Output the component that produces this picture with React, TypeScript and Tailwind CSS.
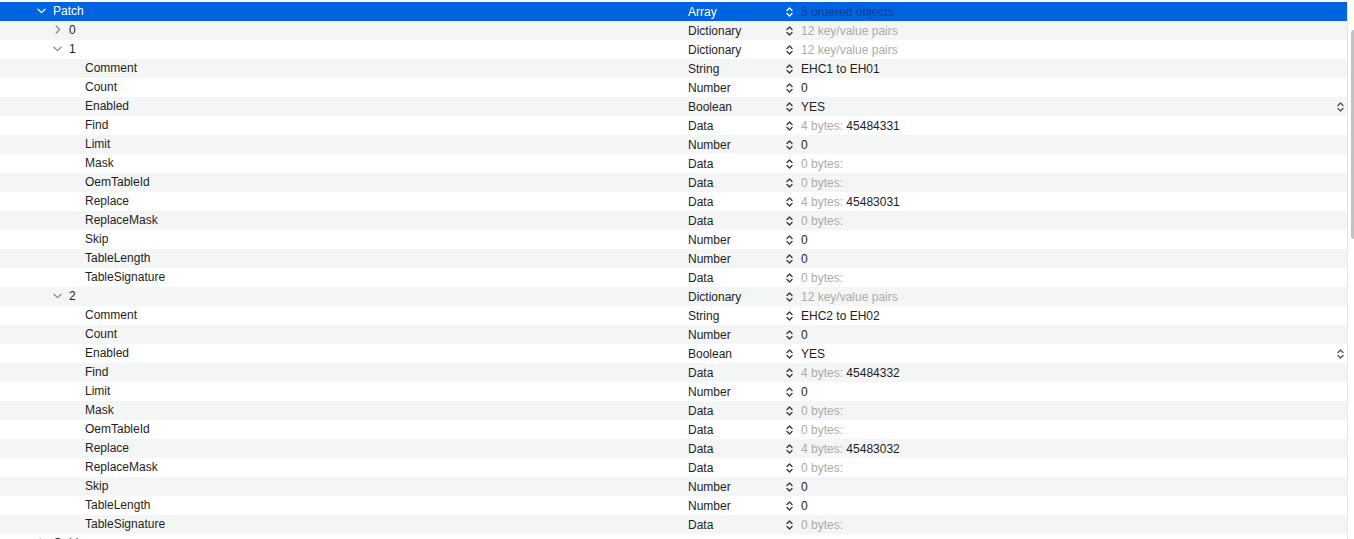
import React from "react";

type Row = {
  key: string;
  level: number;
  type: string;
  value?: string;
  valueMuted?: string;
  chevron?: "down" | "right";
  selected?: boolean;
  extraStepper?: boolean;
};

const entries = (n: number): Row[] => {
  const find = n === 1 ? "45484331" : "45484332";
  const repl = n === 1 ? "45483031" : "45483032";
  return [
    { key: "Comment", level: 2, type: "String", value: `EHC${n} to EH0${n}` },
    { key: "Count", level: 2, type: "Number", value: "0" },
    { key: "Enabled", level: 2, type: "Boolean", value: "YES", extraStepper: true },
    { key: "Find", level: 2, type: "Data", valueMuted: "4 bytes: ", value: find },
    { key: "Limit", level: 2, type: "Number", value: "0" },
    { key: "Mask", level: 2, type: "Data", valueMuted: "0 bytes:" },
    { key: "OemTableId", level: 2, type: "Data", valueMuted: "0 bytes:" },
    { key: "Replace", level: 2, type: "Data", valueMuted: "4 bytes: ", value: repl },
    { key: "ReplaceMask", level: 2, type: "Data", valueMuted: "0 bytes:" },
    { key: "Skip", level: 2, type: "Number", value: "0" },
    { key: "TableLength", level: 2, type: "Number", value: "0" },
    { key: "TableSignature", level: 2, type: "Data", valueMuted: "0 bytes:" },
  ];
};

const rows: Row[] = [
  { key: "Patch", level: 0, type: "Array", valueMuted: "3 ordered objects", chevron: "down", selected: true },
  { key: "0", level: 1, type: "Dictionary", valueMuted: "12 key/value pairs", chevron: "right" },
  { key: "1", level: 1, type: "Dictionary", valueMuted: "12 key/value pairs", chevron: "down" },
  ...entries(1),
  { key: "2", level: 1, type: "Dictionary", valueMuted: "12 key/value pairs", chevron: "down" },
  ...entries(2),
  { key: "Quirks", level: 0, type: "Dictionary", valueMuted: "6 key/value pairs", chevron: "right" },
];

function Chevron({ dir, color }: { dir: "down" | "right"; color: string }) {
  if (dir === "down") {
    return (
      <svg width="9" height="6" viewBox="0 0 9 6">
        <polyline points="1,1.2 4.5,4.6 8,1.2" fill="none" stroke={color} strokeWidth="1.3" strokeLinecap="round" strokeLinejoin="round" />
      </svg>
    );
  }
  return (
    <svg width="6" height="9" viewBox="0 0 6 9" className="ml-[2px]">
      <polyline points="1.2,1 4.6,4.5 1.2,8" fill="none" stroke={color} strokeWidth="1.3" strokeLinecap="round" strokeLinejoin="round" />
    </svg>
  );
}

function Stepper({ color }: { color: string }) {
  return (
    <svg width="7" height="12" viewBox="0 0 7 12">
      <polyline points="1,4.5 3.5,2 6,4.5" fill="none" stroke={color} strokeWidth="1.4" strokeLinecap="round" strokeLinejoin="round" />
      <polyline points="1,7.5 3.5,10 6,7.5" fill="none" stroke={color} strokeWidth="1.4" strokeLinecap="round" strokeLinejoin="round" />
    </svg>
  );
}

const indent = ["pl-[37px]", "pl-[53px]", "pl-[69px]"];

function TreeRow({ row, index }: { row: Row; index: number }) {
  const bg = row.selected ? "bg-[#0064e1]" : index % 2 === 1 ? "bg-[#f4f5f5]" : "bg-white";
  const text = row.selected ? "text-white" : "text-[#1e1e1e]";
  const muted = row.selected ? "text-[#0b3e96]" : "text-[#ababab]";
  return (
    <div className={`flex h-[19px] shrink-0 items-center ${bg}`}>
      <div className={`flex w-[688px] shrink-0 items-center pb-[2px] ${indent[row.level]} ${text}`}>
        <div className="flex w-[16px] shrink-0 items-center">
          {row.chevron && <Chevron dir={row.chevron} color={row.selected ? "#ffffff" : "#8a8a8a"} />}
        </div>
        <span className="whitespace-nowrap">{row.key}</span>
      </div>
      <div className={`w-[98px] shrink-0 whitespace-nowrap ${text}`}>{row.type}</div>
      <div className="flex flex-1 items-center pr-[3px]">
        <div className="flex w-[15px] shrink-0 items-center">
          <Stepper color={row.selected ? "#ffffff" : "#3a3a3a"} />
        </div>
        <span className="whitespace-nowrap">
          {row.valueMuted && <span className={muted}>{row.valueMuted}</span>}
          {row.value && <span className={text}>{row.value}</span>}
        </span>
        {row.extraStepper && (
          <div className="ml-auto flex items-center">
            <Stepper color="#555555" />
          </div>
        )}
      </div>
    </div>
  );
}

export default function App() {
  return (
    <div
      className="flex h-[539px] w-[1354px] overflow-hidden bg-white text-[12px] leading-[14px]"
      style={{ fontFamily: '"Liberation Sans", Arial, sans-serif' }}
    >
      <div className="flex w-[1347px] shrink-0 flex-col pt-[2px]">
        {rows.map((r, i) => (
          <TreeRow key={i} row={r} index={i} />
        ))}
      </div>
      <div className="flex flex-1 border-l border-[#e6e6e6] pl-[3px] pt-[30px]">
        <div className="h-[209px] w-[6px] rounded-full bg-[#c2c2c2]" />
      </div>
    </div>
  );
}
